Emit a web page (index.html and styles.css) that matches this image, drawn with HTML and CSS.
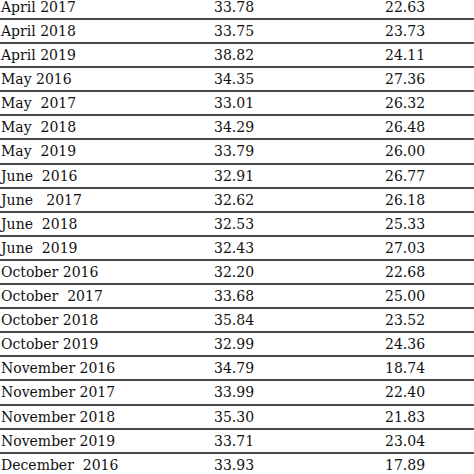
FILE: index.html
```html
<!DOCTYPE html>
<html>
<head>
<meta charset="utf-8">
<link rel="stylesheet" href="styles.css">
</head>
<body>
<div class="table">
  <div class="row"><span class="c1">April 2017</span><span class="c2">33.78</span><span class="c3">22.63</span></div>
  <div class="row"><span class="c1">April 2018</span><span class="c2">33.75</span><span class="c3">23.73</span></div>
  <div class="row"><span class="c1">April 2019</span><span class="c2">38.82</span><span class="c3">24.11</span></div>
  <div class="row"><span class="c1">May 2016</span><span class="c2">34.35</span><span class="c3">27.36</span></div>
  <div class="row"><span class="c1">May  2017</span><span class="c2">33.01</span><span class="c3">26.32</span></div>
  <div class="row"><span class="c1">May  2018</span><span class="c2">34.29</span><span class="c3">26.48</span></div>
  <div class="row"><span class="c1">May  2019</span><span class="c2">33.79</span><span class="c3">26.00</span></div>
  <div class="row"><span class="c1">June  2016</span><span class="c2">32.91</span><span class="c3">26.77</span></div>
  <div class="row"><span class="c1">June   2017</span><span class="c2">32.62</span><span class="c3">26.18</span></div>
  <div class="row"><span class="c1">June  2018</span><span class="c2">32.53</span><span class="c3">25.33</span></div>
  <div class="row"><span class="c1">June  2019</span><span class="c2">32.43</span><span class="c3">27.03</span></div>
  <div class="row"><span class="c1">October 2016</span><span class="c2">32.20</span><span class="c3">22.68</span></div>
  <div class="row"><span class="c1">October  2017</span><span class="c2">33.68</span><span class="c3">25.00</span></div>
  <div class="row"><span class="c1">October 2018</span><span class="c2">35.84</span><span class="c3">23.52</span></div>
  <div class="row"><span class="c1">October 2019</span><span class="c2">32.99</span><span class="c3">24.36</span></div>
  <div class="row"><span class="c1">November 2016</span><span class="c2">34.79</span><span class="c3">18.74</span></div>
  <div class="row"><span class="c1">November 2017</span><span class="c2">33.99</span><span class="c3">22.40</span></div>
  <div class="row"><span class="c1">November 2018</span><span class="c2">35.30</span><span class="c3">21.83</span></div>
  <div class="row"><span class="c1">November 2019</span><span class="c2">33.71</span><span class="c3">23.04</span></div>
  <div class="row"><span class="c1">December  2016</span><span class="c2">33.93</span><span class="c3">17.89</span></div>
</div>
</body>
</html>
```
FILE: styles.css
```css
html, body {
  margin: 0;
  padding: 0;
  background: #ffffff;
  overflow: hidden;
}

.table {
  margin-top: -4.1px;
  font-family: "DejaVu Serif", "Liberation Serif", serif;
  font-size: 14px;
  color: #111111;
}

.row {
  display: grid;
  grid-template-columns: 214px 171px 1fr;
  height: 24.1px;
  box-sizing: border-box;
  border-bottom: 2px solid #4a4a4a;
  padding-top: 3px;
  line-height: 17px;
  white-space: pre;
}

.c1 {
  padding-left: 1px;
}
```
